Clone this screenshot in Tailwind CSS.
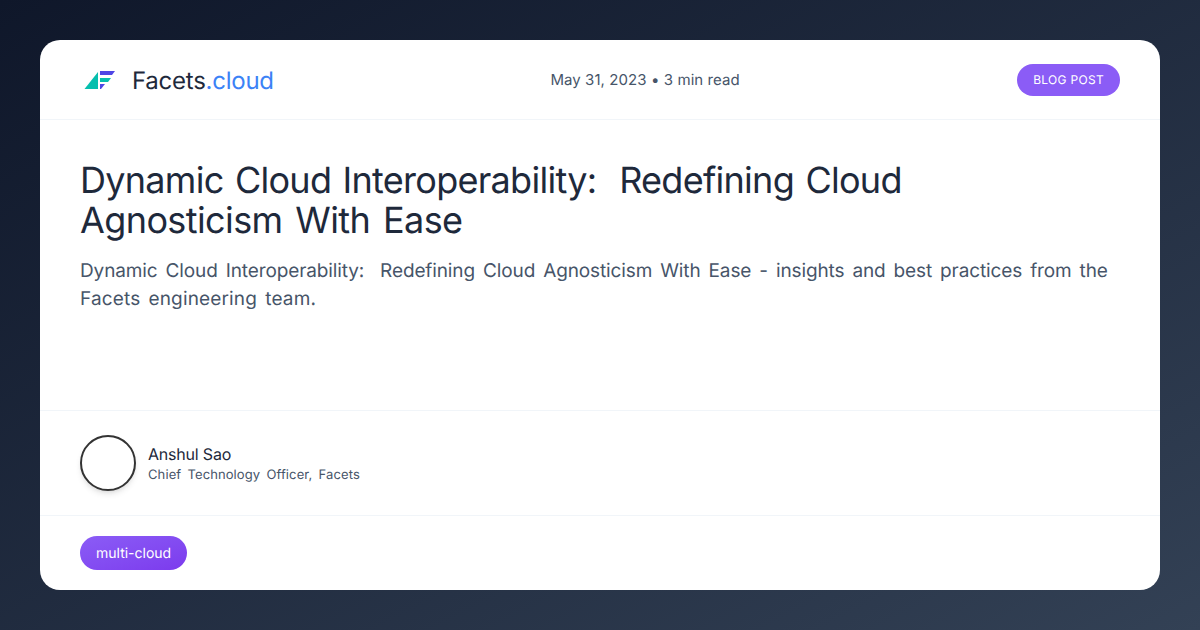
<!DOCTYPE html>
<html><head><meta charset="utf-8"><script src="https://cdn.jsdelivr.net/npm/@tailwindcss/browser@4"></script></head>
<body class="m-0">
<div class="w-[1200px] h-[630px] overflow-hidden p-10 bg-gradient-to-br from-[#0f172a] to-[#334155] font-['Inter',sans-serif] [text-rendering:geometricPrecision]">
<div class="h-[550px] bg-white rounded-[20px] flex flex-col overflow-hidden">
<header class="h-20 shrink-0 border-b border-[#f1f5f9] px-10 flex items-center justify-between">
<div class="flex items-center gap-3 w-[193px]">
<svg class="w-10 h-10 shrink-0" viewBox="0 0 40 40"><polygon points="4.5,29 18,12 18,29" fill="#06bfae"/><polygon points="20,11 35,11 32,15 20,15" fill="#4f46e5"/><polygon points="20,18 31,18 28,22 20,22" fill="#06bfae"/><polygon points="20,24 25,24 21,29 20,29" fill="#4f46e5"/></svg>
<div class="text-2xl leading-8 pt-0.5 tracking-[-0.25px] text-[#1e293b] whitespace-nowrap">Facets<span class="text-[#3b82f6]">.cloud</span></div>
</div>
<div class="text-[15px] pt-0.5 tracking-[0.08px] text-[#475569]">May 31, 2023 • 3 min read</div>
<div class="rounded-full bg-[#8b5cf6] text-white text-xs tracking-[0.3px] h-8 px-4 flex items-center">BLOG POST</div>
</header>
<main class="h-[291px] shrink-0 px-10 pt-10 border-b border-[#f1f5f9]">
<h1 class="text-[36px] leading-10 text-[#1e293b]"><span class="block tracking-[-0.72px] [word-spacing:2px]">Dynamic Cloud Interoperability:&nbsp; Redefining Cloud</span> <span class="block tracking-[-0.6px] [word-spacing:3.3px]">Agnosticism With Ease</span></h1>
<p class="mt-[17px] text-[19px] leading-7 text-[#475569]"><span class="block tracking-[-0.12px] [word-spacing:2.8px] whitespace-nowrap">Dynamic Cloud Interoperability:&nbsp; Redefining Cloud Agnosticism With Ease - insights and best practices from the</span> <span class="block tracking-[0.15px] [word-spacing:2.7px]">Facets engineering team.</span></p>
</main>
<section class="h-[105px] shrink-0 px-10 flex items-center gap-3 border-b border-[#f1f5f9]">
<div class="w-14 h-14 rounded-full border-2 border-[#333] bg-white shadow-md"></div>
<div class="pt-0.5">
<div class="text-base leading-5 tracking-[-0.2px] text-[#1e293b]">Anshul Sao</div>
<div class="mt-px text-[13px] leading-5 tracking-[0.1px] [word-spacing:2.5px] text-[#475569]">Chief Technology Officer, Facets</div>
</div>
</section>
<footer class="flex-1 px-10 flex items-center">
<div class="rounded-full bg-gradient-to-br from-[#8b5cf6] to-[#7c3aed] text-white text-[14px] h-[34px] px-4 flex items-center">multi-cloud</div>
</footer>
</div>
</div>
</body></html>
